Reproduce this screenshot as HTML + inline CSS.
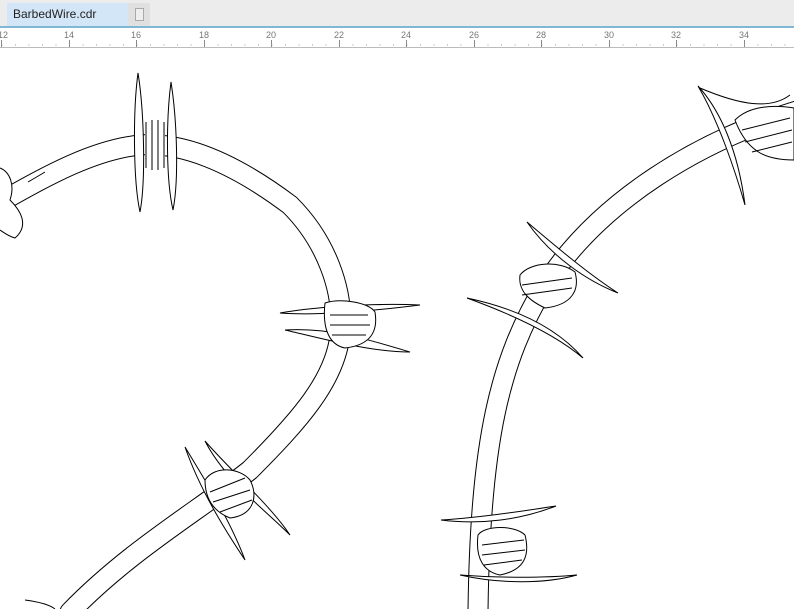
<!DOCTYPE html>
<html><head><style>
html,body{margin:0;padding:0;width:794px;height:609px;overflow:hidden;background:#fff;font-family:"Liberation Sans",sans-serif}
#tabs{position:absolute;left:0;top:0;width:794px;height:26px;background:#ececec;border-bottom:2px solid #7fb8d4}
#tab{position:absolute;left:7px;top:3px;width:121px;height:23px;background:#d3e6f7;font-size:12px;line-height:23px;padding-left:6px;box-sizing:border-box;color:#222}
#tab2{position:absolute;left:128px;top:3px;width:22px;height:23px;background:#e0e0e0}
#tab2 i{position:absolute;left:7px;top:5px;width:7px;height:11px;border:1px solid #aaa;background:#eee}
#ruler{position:absolute;left:0;top:28px;width:794px;height:19px;background:#fff;border-bottom:1px solid #bbb}
</style></head><body>
<div id="tabs"><div id="tab">BarbedWire.cdr</div><div id="tab2"><i></i></div></div>
<svg id="ruler" width="794" height="20" style="position:absolute;left:0;top:28px">
<g font-family="Liberation Sans" font-size="9" fill="#777">
<text x="-2" y="10">12</text><text x="64" y="10">14</text><text x="131" y="10">16</text><text x="199" y="10">18</text><text x="266" y="10">20</text><text x="334" y="10">22</text><text x="401" y="10">24</text><text x="469" y="10">26</text><text x="536" y="10">28</text><text x="604" y="10">30</text><text x="671" y="10">32</text><text x="739" y="10">34</text>
</g>
<g stroke="#888" stroke-width="1">
<path d="M1.5 12V19M69.5 12V19M136.5 12V19M204.5 12V19M271.5 12V19M339.5 12V19M406.5 12V19M474.5 12V19M541.5 12V19M609.5 12V19M676.5 12V19M744.5 12V19"/>
</g>
<g stroke="#999" stroke-dasharray="1 12.5" stroke-dashoffset="-0.5"><path d="M1 17H794"/></g>
<path d="M0 19.5H794" stroke="#bbb"/>
</svg>
<svg width="794" height="561" viewBox="0 48 794 561" style="position:absolute;left:0;top:48px" fill="none">
<g stroke-linecap="round" stroke-linejoin="round">
<path d="M-5 205 C40 180 90 150 140 145 C180 142 230 160 290 205 C325 240 345 290 340 335 C335 380 300 420 250 470 C200 510 130 550 70 612" stroke="#000" stroke-width="21"/>
<path d="M-5 205 C40 180 90 150 140 145 C180 142 230 160 290 205 C325 240 345 290 340 335 C335 380 300 420 250 470 C200 510 130 550 70 612" stroke="#fff" stroke-width="19"/>
<path d="M800 110 C700 140 600 200 545 285 C500 360 480 440 478 612" stroke="#000" stroke-width="21"/>
<path d="M800 110 C700 140 600 200 545 285 C500 360 480 440 478 612" stroke="#fff" stroke-width="19"/>
</g>
<g stroke="#000" stroke-width="1" fill="#fff">
<!-- top barb -->
<path d="M138 73 C133 110 133 180 140 212 C146 180 144 110 138 73Z"/>
<path d="M171 82 C166 120 166 180 173 210 C179 180 177 120 171 82Z"/>
<path d="M145 120 L165 120 L165 170 L145 170Z" stroke="none"/>
<path d="M146 122 V168 M152 120 V170 M158 120 V170 M164 122 V168"/>
<!-- right barb -->
<path d="M280 313 C320 306 380 303 420 305 C380 310 320 316 280 313Z"/>
<path d="M285 330 C330 327 370 340 410 352 C370 352 320 338 285 330Z"/>
<path d="M325 303 C340 298 368 302 375 312 C378 330 372 345 345 348 C330 345 322 330 325 303Z"/>
<path d="M330 315 H368 M330 325 H370 M332 335 H366"/>
<!-- lower-left barb -->
<path d="M185 447 C205 480 230 520 245 560 C225 530 200 490 185 447Z"/>
<path d="M205 441 C230 470 270 505 290 535 C265 510 225 480 205 441Z"/>
<path d="M205 480 C215 465 240 468 250 480 C258 495 255 515 230 518 C215 512 205 500 205 480Z"/>
<path d="M210 492 L245 478 M213 502 L250 490 M220 512 L252 500"/>
<path d="M25 600 C40 602 50 605 55 609"/>
<!-- right arc barbs -->
<path d="M698 86 C720 110 738 150 745 205 C735 170 718 120 698 86Z"/>
<path d="M700 88 C740 105 770 110 790 95"/>
<path d="M735 120 C750 105 775 105 794 108 V160 C770 160 748 155 735 120Z"/>
<path d="M742 130 L790 118 M745 142 L792 130 M752 152 L792 142"/>
<path d="M527 222 C560 250 590 275 618 293 C585 280 550 255 527 222Z"/>
<path d="M467 298 C500 305 550 320 583 358 C550 330 500 310 467 298Z"/>
<path d="M520 275 C530 262 560 260 575 272 C580 290 572 305 545 308 C528 300 518 290 520 275Z"/>
<path d="M522 285 L572 278 M522 295 L572 288"/>
<path d="M441 520 C480 518 530 510 556 506 C520 520 480 525 441 520Z"/>
<path d="M460 575 C500 578 545 578 577 575 C545 584 500 584 460 575Z"/>
<path d="M478 535 C485 525 515 525 525 535 C530 555 525 570 500 575 C485 572 475 560 478 535Z"/>
<path d="M482 545 L524 540 M482 555 L525 550 M484 565 L522 560"/>
<!-- left edge coil -->
<path d="M0 168 C10 172 15 185 10 200 C20 210 30 225 15 238 C8 236 3 232 0 230"/>
<path d="M28 182 C35 178 40 175 45 172"/>
</g>
</svg>
</body></html>
